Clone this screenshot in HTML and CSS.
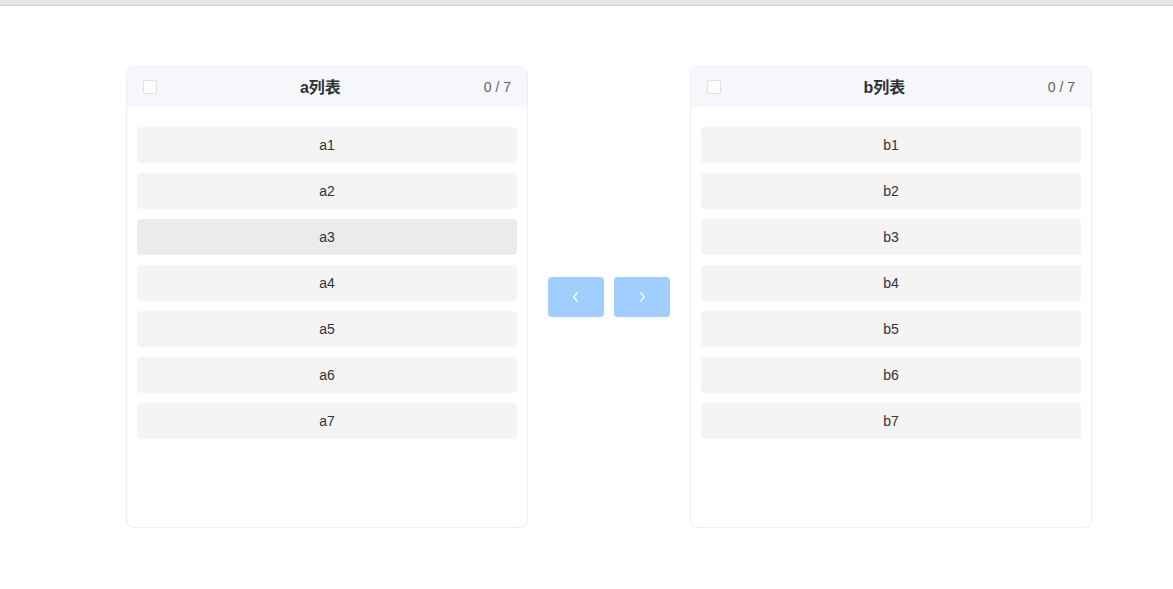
FILE: index.html
```html
<!DOCTYPE html>
<html lang="zh-CN">
<head>
    <meta charset="UTF-8">
    <meta name="viewport" content="width=device-width, initial-scale=1.0">
    <title>穿梭框</title>
    <link rel="stylesheet" href="styles.css">
</head>
<body>
    <div class="topbar"></div>
    <div class="page">
        <div class="transfer">
            <div class="panel">
                <div class="panel-header">
                    <span class="checkbox"></span>
                    <span class="panel-title">a列表</span>
                    <span class="panel-count">0 / 7</span>
                </div>
                <ul class="panel-list">
                    <li class="item">a1</li>
                    <li class="item">a2</li>
                    <li class="item hover">a3</li>
                    <li class="item">a4</li>
                    <li class="item">a5</li>
                    <li class="item">a6</li>
                    <li class="item">a7</li>
                </ul>
            </div>

            <div class="buttons">
                <button class="btn" disabled>
                    <svg width="12" height="12" viewBox="0 0 12 12"><path d="M7.5 1.5 L3.7 6 L7.5 10.5" fill="none" stroke="#fff" stroke-width="1.3"/></svg>
                </button>
                <button class="btn" disabled>
                    <svg width="12" height="12" viewBox="0 0 12 12"><path d="M4.5 1.5 L8.3 6 L4.5 10.5" fill="none" stroke="#fff" stroke-width="1.3"/></svg>
                </button>
            </div>

            <div class="panel">
                <div class="panel-header">
                    <span class="checkbox"></span>
                    <span class="panel-title">b列表</span>
                    <span class="panel-count">0 / 7</span>
                </div>
                <ul class="panel-list">
                    <li class="item">b1</li>
                    <li class="item">b2</li>
                    <li class="item">b3</li>
                    <li class="item">b4</li>
                    <li class="item">b5</li>
                    <li class="item">b6</li>
                    <li class="item">b7</li>
                </ul>
            </div>
        </div>
    </div>
</body>
</html>
```

FILE: styles.css
```css
body {
    margin: 0;
    font-family: "Liberation Sans", "Noto Sans CJK SC", sans-serif;
    background: #fff;
    color: #303133;
}
.topbar {
    height: 5px;
    background: #e6e6e6;
    border-bottom: 1px solid #cfcfcf;
}
.page {
    padding: 60px 0 0 126px;
}
.transfer {
    display: flex;
    align-items: center;
}
.panel {
    box-sizing: border-box;
    width: 402px;
    height: 462px;
    border: 1px solid #ebeef5;
    border-radius: 8px;
    overflow: hidden;
    background: #fff;
}
.panel-header {
    height: 40px;
    background: #f5f7fa;
    display: flex;
    align-items: center;
    padding: 0 16px;
}
.checkbox {
    box-sizing: border-box;
    width: 14px;
    height: 14px;
    border: 1px solid #dcdfe6;
    border-radius: 2px;
    background: #fff;
}
.panel-title {
    flex: 1;
    text-align: center;
    font-size: 16px;
    font-weight: bold;
    color: #303133;
    margin-top: -2px;
}
.panel-count {
    font-size: 14px;
    color: #606266;
}
.panel-list {
    list-style: none;
    margin: 0;
    padding: 20px 10px;
}
.item {
    height: 36px;
    line-height: 36px;
    margin-bottom: 10px;
    background: #f4f4f5;
    border-radius: 4px;
    text-align: center;
    font-size: 14px;
    color: #333;
}
.item.hover {
    background: #ebebeb;
}
.buttons {
    display: flex;
    gap: 10px;
    margin: 0 20px;
}
.btn {
    width: 56px;
    height: 40px;
    border: none;
    border-radius: 4px;
    background: #a0cfff;
    display: flex;
    align-items: center;
    justify-content: center;
    padding: 0;
}
```
